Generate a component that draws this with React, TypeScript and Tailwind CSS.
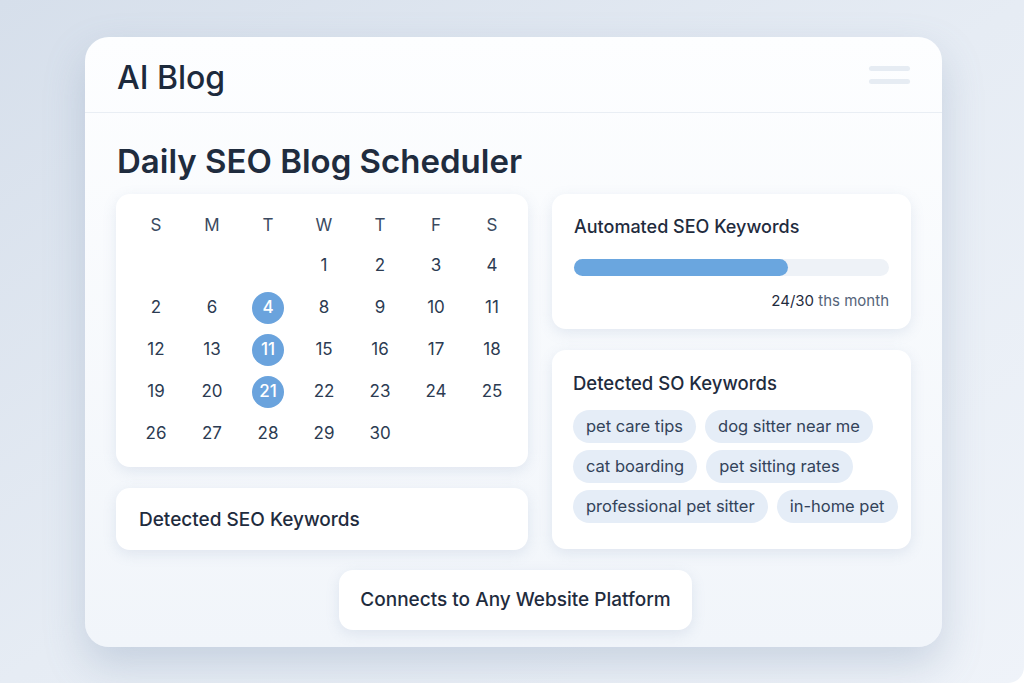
import React from "react";

const weekDays = ["S", "M", "T", "W", "T", "F", "S"];

const weeks: (number | null)[][] = [
  [null, null, null, 1, 2, 3, 4],
  [2, 6, 4, 8, 9, 10, 11],
  [12, 13, 11, 15, 16, 17, 18],
  [19, 20, 21, 22, 23, 24, 25],
  [26, 27, 28, 29, 30, null, null],
];

const keywordRows = [
  ["pet care tips", "dog sitter near me"],
  ["cat boarding", "pet sitting rates"],
  ["professional pet sitter", "in-home pet"],
];

const cardClass =
  "rounded-[14px] bg-white shadow-[0_4px_14px_rgba(120,145,180,0.16)]";

function Calendar() {
  return (
    <div className={`${cardClass} h-[273px] pl-[12px] pr-[8px] pt-[13px]`}>
      <div className="grid h-[38px] grid-cols-7 items-center text-center text-[17px] text-[#3b4a60]">
        {weekDays.map((d, i) => (
          <span key={i}>{d}</span>
        ))}
      </div>
      {weeks.map((week, wi) => (
        <div key={wi} className="grid h-[42px] grid-cols-7 items-center text-center text-[17px] text-[#2c3b52]">
          {week.map((day, di) => {
            const picked = di === 2 && wi >= 1 && wi <= 3;
            return (
              <div key={di} className="flex justify-center">
                {day === null ? null : picked ? (
                  <span className="flex h-[32px] w-[32px] items-center justify-center rounded-full bg-[#6aa3dd] font-medium text-white">
                    {day}
                  </span>
                ) : (
                  <span>{day}</span>
                )}
              </div>
            );
          })}
        </div>
      ))}
    </div>
  );
}

export default function App() {
  return (
    <div className="h-[683px] w-full bg-white" style={{ fontFamily: "Inter, 'Noto Sans', sans-serif" }}>
      <div className="h-full w-full rounded-br-[16px] bg-gradient-to-br from-[#d6dfeb] via-[#e6ecf4] to-[#eff3f9] pl-[85px] pt-[37px]">
        <div className="flex h-[610px] w-[857px] flex-col rounded-[24px] bg-gradient-to-b from-[#fdfeff] to-[#f1f5fa] shadow-[0_18px_40px_rgba(110,135,170,0.28)]">
          <div className="flex h-[76px] shrink-0 items-center justify-between border-b border-[#e9eef4] pl-[32px] pr-[32px] pt-[6px]">
            <span className="text-[32px] font-medium text-[#1d2a3c]">AI Blog</span>
            <div className="mb-[6px] flex w-[41px] flex-col gap-[8px]">
              <span className="h-[5px] rounded-full bg-[#e6ecf3]" />
              <span className="h-[5px] rounded-full bg-[#e6ecf3]" />
            </div>
          </div>

          <div className="px-[31px] pt-[28px]">
            <h1 className="pl-[1px] text-[33px] font-semibold leading-[40px] text-[#1f2c3e]">
              Daily SEO Blog Scheduler
            </h1>

            <div className="mt-[13px] grid grid-cols-[412px_359px] gap-x-[24px]">
              <div className="flex flex-col gap-[21px]">
                <Calendar />
                <div className={`${cardClass} flex h-[62px] items-center px-[23px] pt-[3px] text-[19px] font-medium text-[#1f2c3e]`}>
                  Detected SEO Keywords
                </div>
              </div>

              <div className="flex flex-col gap-[21px]">
                <div className={`${cardClass} h-[135px] px-[22px] pt-[21px]`}>
                  <p className="text-[18px] font-medium leading-[24px] text-[#1f2c3e]">Automated SEO Keywords</p>
                  <div className="mt-[20px] h-[17px] w-full rounded-full bg-[#eef2f7]">
                    <div className="h-full rounded-full bg-[#6aa6df]" style={{ width: "68%" }} />
                  </div>
                  <p className="mt-[15px] text-right text-[15px] leading-[20px] text-[#55647a]">
                    <span className="text-[#1f2c3e]">24/30</span> ths month
                  </p>
                </div>

                <div className={`${cardClass} h-[199px] px-[21px] pt-[21px]`}>
                  <p className="text-[18.5px] font-medium leading-[24px] text-[#1f2c3e]">Detected SO Keywords</p>
                  <div className="mt-[15px] flex flex-col gap-[7px]">
                    {keywordRows.map((row, ri) => (
                      <div key={ri} className="flex gap-x-[9px] whitespace-nowrap">
                        {row.map((k) => (
                          <span
                            key={k}
                            className="flex h-[33px] items-center rounded-full bg-[#e5edf7] px-[13px] text-[16.5px] text-[#33435a]"
                          >
                            {k}
                          </span>
                        ))}
                      </div>
                    ))}
                  </div>
                </div>
              </div>
            </div>

            <div className="mt-[20px] flex justify-center pl-[4px]">
              <div className={`${cardClass} flex h-[60px] w-[353px] items-center justify-center rounded-[12px] text-[19px] font-medium text-[#1f2c3e]`}>
                Connects to Any Website Platform
              </div>
            </div>
          </div>
        </div>
      </div>
    </div>
  );
}
